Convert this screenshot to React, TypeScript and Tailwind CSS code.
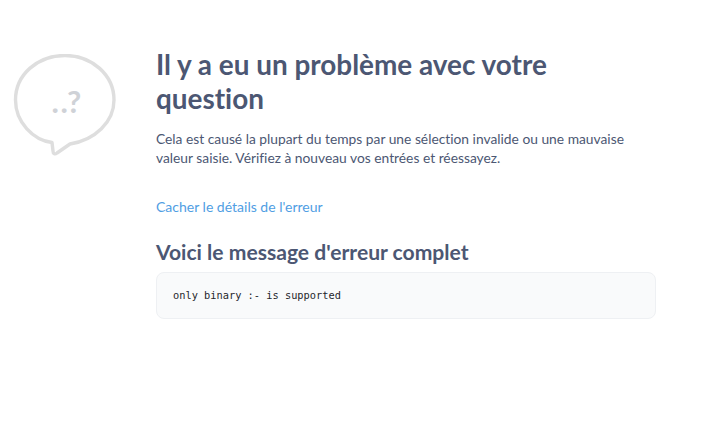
export default function App() {
  return (
    <div className="h-[423px] w-[707px] bg-white font-['Lato',sans-serif] [font-variant-ligatures:none] flex items-start pl-[13px] pt-[47px]">
      <svg className="w-[104px] h-[104px] mt-[7px] shrink-0" viewBox="0 0 104 104" fill="none">
        <path
          d="M52 1.5C24 1.5 2.5 21 2.5 46C2.5 68 20 86 39 88.5L40 97C40 100 42 100.5 44 99L57 90C82 86 101 68 101 46C101 21 79 1.5 52 1.5Z"
          stroke="#dedede"
          strokeWidth="3.4"
          strokeLinejoin="round"
        />
        <text x="38.4 47.4 54" y="58.7" fontFamily="Lato" fontWeight="700" fontSize="31" fill="#cfd2d7">..?</text>
      </svg>
      <div className="ml-[39px] w-[500px] text-[#4c5773]">
        <h1 className="text-[27.9px] leading-[34px] font-bold">Il y a eu un problème avec votre question</h1>
        <p className="mt-[14px] text-[13.8px] leading-[19px]">
          Cela est causé la plupart du temps par une sélection invalide ou une mauvaise valeur saisie. Vérifiez à nouveau vos entrées et réessayez.
        </p>
        <a className="block mt-[30px] text-[14px] leading-[19px] text-[#509ee3]">Cacher le détails de l'erreur</a>
        <h2 className="mt-[23px] text-[21.1px] leading-[25px] font-bold">Voici le message d'erreur complet</h2>
        <div className="mt-[8px] h-[47px] flex items-center px-[16px] rounded-lg border border-[#eef0f3] bg-[#f9fafb] font-['DejaVu_Sans_Mono',monospace] text-[10.33px] text-[#1f262b]">
          only binary :- is supported
        </div>
      </div>
    </div>
  )
}
